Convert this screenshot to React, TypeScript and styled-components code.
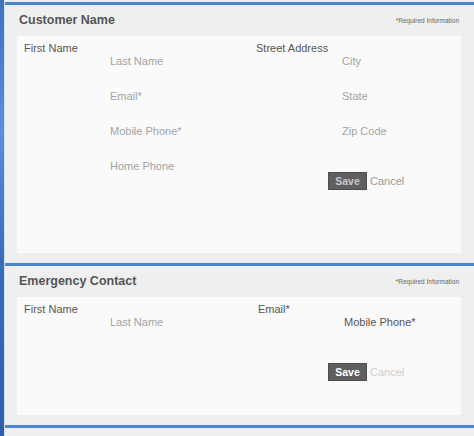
import React from "react"
import styled, { createGlobalStyle } from "styled-components"

const BLUE = "#4a86c8"
const PANEL = "#efefef"
const CARD = "#fafafa"
const DARK_TEXT = "#555555"
const MUTED_TEXT = "#a3a3a3"

const GlobalStyle = createGlobalStyle`
  html, body {
    margin: 0;
    padding: 0;
    background: ${PANEL};
  }
  body {
    font-family: "Liberation Sans", Arial, sans-serif;
  }
`

const Page = styled.div`
  display: flex;
  width: 474px;
  height: 436px;
  overflow: hidden;
`

const Rail = styled.div`
  width: 4px;
  flex: none;
  background: linear-gradient(180deg, #3f73bb 0%, #5a8fd0 30%, #3a6cb4 60%, #2f5fa6 100%);
  border-right: 1px solid #d9dfe8;
`

const Main = styled.div`
  flex: 1;
  display: flex;
  flex-direction: column;
  background: ${PANEL};
`

const Divider = styled.div`
  height: 3px;
  flex: none;
  background: ${BLUE};
  border-top: 2px solid #e6edf5;
  border-bottom: 1px solid #e9eef4;
`

const Section = styled.section`
  display: flex;
  flex-direction: column;
  padding-bottom: 8px;
`

const Header = styled.div`
  height: 30px;
  box-sizing: border-box;
  padding: 0 15px 2px 14px;
  display: flex;
  align-items: center;
  justify-content: space-between;
`

const Title = styled.h2`
  margin: 0;
  font-size: 12.5px;
  line-height: 17px;
  font-weight: bold;
  color: ${DARK_TEXT};
`

const Required = styled.span`
  font-size: 6.5px;
  color: #666;
`

const Card = styled.div<{ $height: number; $split: number }>`
  height: ${(p) => p.$height}px;
  box-sizing: border-box;
  margin: 0 13px 0 12px;
  padding: 6px 7px;
  background: ${CARD};
  display: grid;
  grid-template-columns: ${(p) => p.$split}px 1fr;
  align-content: start;
`

const Column = styled.div`
  display: flex;
  flex-direction: column;
`

const Label = styled.div`
  font-size: 11px;
  line-height: 13px;
  color: ${DARK_TEXT};
`

const Fields = styled.div`
  display: flex;
  flex-direction: column;
  gap: 22px;
  padding-left: 86px;
`

const Field = styled.div<{ $muted?: boolean }>`
  font-size: 11px;
  line-height: 13px;
  color: ${(p) => (p.$muted ? MUTED_TEXT : DARK_TEXT)};
`

const ButtonRow = styled.div<{ $indent: number }>`
  display: flex;
  align-items: center;
  gap: 3px;
  margin-top: 34px;
  padding-left: ${(p) => p.$indent}px;
`

const SaveButton = styled.button<{ $dim?: boolean }>`
  width: 39px;
  height: 18px;
  padding: 0;
  border: 1px solid #4d4d4d;
  background: #5f5f5f;
  color: ${(p) => (p.$dim ? "#c9c9c9" : "#ffffff")};
  font-family: inherit;
  font-size: 10.5px;
  font-weight: bold;
  cursor: pointer;
`

const CancelLink = styled.span<{ $dim?: boolean }>`
  font-size: 11px;
  color: ${(p) => (p.$dim ? "#cfcfcf" : "#999999")};
  cursor: pointer;
`

const App = () => (
  <>
    <GlobalStyle />
    <Page>
      <Rail />
      <Main>
        <Divider />
        <Section>
          <Header>
            <Title>Customer Name</Title>
            <Required>*Required Information</Required>
          </Header>
          <Card $height={217} $split={232}>
            <Column>
              <Label>First Name</Label>
              <Fields>
                <Field $muted>Last Name</Field>
                <Field $muted>Email*</Field>
                <Field $muted>Mobile Phone*</Field>
                <Field $muted>Home Phone</Field>
              </Fields>
            </Column>
            <Column>
              <Label>Street Address</Label>
              <Fields>
                <Field $muted>City</Field>
                <Field $muted>State</Field>
                <Field $muted>Zip Code</Field>
              </Fields>
              <ButtonRow $indent={72}>
                <SaveButton $dim>Save</SaveButton>
                <CancelLink>Cancel</CancelLink>
              </ButtonRow>
            </Column>
          </Card>
        </Section>
        <Divider />
        <Section>
          <Header>
            <Title>Emergency Contact</Title>
            <Required>*Required Information</Required>
          </Header>
          <Card $height={118} $split={234}>
            <Column>
              <Label>First Name</Label>
              <Fields>
                <Field $muted>Last Name</Field>
              </Fields>
            </Column>
            <Column>
              <Label>Email*</Label>
              <Fields>
                <Field>Mobile Phone*</Field>
              </Fields>
              <ButtonRow $indent={70}>
                <SaveButton>Save</SaveButton>
                <CancelLink $dim>Cancel</CancelLink>
              </ButtonRow>
            </Column>
          </Card>
        </Section>
        <Divider />
      </Main>
    </Page>
  </>
)

export default App
